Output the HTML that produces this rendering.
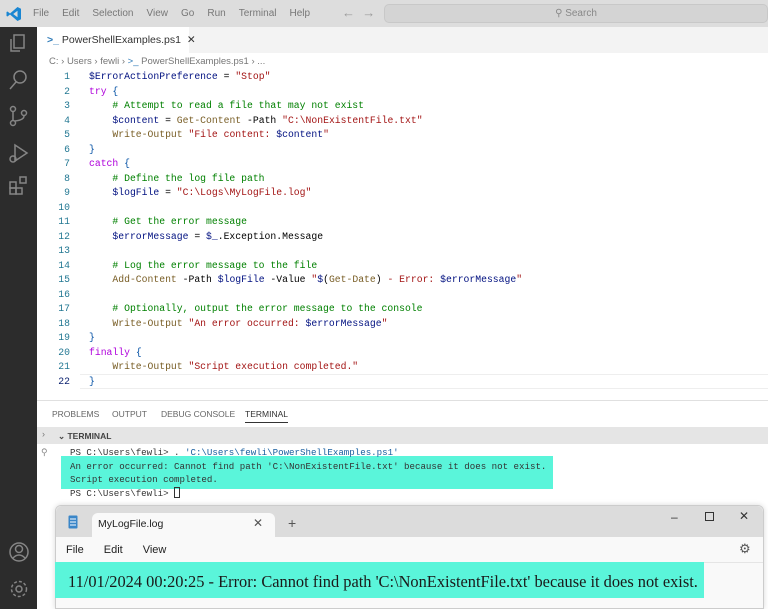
<!DOCTYPE html>
<html><head><meta charset="utf-8"><style>
*{margin:0;padding:0;box-sizing:border-box}
body{width:768px;height:609px;overflow:hidden;background:#fff;font-family:"Liberation Sans",sans-serif;position:relative}
.abs{position:absolute}
.mono{font-family:"Liberation Mono",monospace;font-size:9.75px;white-space:pre}
.code div{position:absolute;left:0;height:14px;line-height:14px}
.code .ln{position:absolute;width:34px;text-align:right;color:#237893;left:36px}
.k{color:#af00db}.v{color:#001080}.s{color:#a31515}.c{color:#008000}.f{color:#795e26}.p{color:#0451a5}.o{color:#000}
.menu span{margin-right:13px}
</style></head><body>
<!-- title bar -->
<div class="abs" style="left:0;top:0;width:768px;height:27px;background:#dddddd"></div>
<svg class="abs" style="left:6px;top:6px" width="16" height="16" viewBox="0 0 16 16"><path d="M11.5 1 L15 2.7 V13.3 L11.5 15 L4 8.5 L1.5 10.5 L0.5 10 V6 L1.5 5.5 L4 7.5 Z M11.5 4.8 L7.2 8 L11.5 11.2 Z" fill="#1a86d2"/></svg>
<div class="abs menu" style="left:33px;top:8px;font-size:10px;color:#777;white-space:nowrap">
<span>File</span><span>Edit</span><span>Selection</span><span>View</span><span>Go</span><span>Run</span><span>Terminal</span><span>Help</span></div>
<div class="abs" style="left:342px;top:5px;font-size:13px;color:#999">←&nbsp;&nbsp;→</div>
<div class="abs" style="left:384px;top:4px;width:384px;height:19px;background:#d4d4d4;border:1px solid #c8c8c8;border-radius:5px;font-size:10px;color:#888;text-align:center;line-height:17px">⚲ Search</div>
<!-- activity bar -->
<div class="abs" style="left:0;top:27px;width:37px;height:582px;background:#2c2c2c"></div>
<svg class="abs" style="left:7px;top:32px" width="24" height="170" viewBox="0 0 24 170" fill="none" stroke="#858585" stroke-width="1.5">
<rect x="7" y="3" width="10" height="13"/><path d="M4 7 V19 H13"/>
<circle cx="13" cy="45" r="6"/><path d="M9 50 L3 57"/>
<circle cx="6" cy="77" r="2.5"/><circle cx="6" cy="91" r="2.5"/><circle cx="17" cy="81" r="2.5"/><path d="M6 80 V88 M17 84 Q17 88 8 89"/>
<path d="M8 113 V129 L20 121 Z"/><circle cx="6" cy="127" r="3"/>
<rect x="3" y="156" width="6" height="6"/><rect x="9" y="156" width="6" height="6"/><rect x="3" y="150" width="6" height="6"/><rect x="13" y="145" width="6" height="6"/>
</svg>
<svg class="abs" style="left:7px;top:540px" width="24" height="62" viewBox="0 0 24 62" fill="none" stroke="#858585" stroke-width="1.5">
<circle cx="12" cy="12" r="9"/><circle cx="12" cy="9" r="3.5"/><path d="M6 18 Q12 12 18 18"/>
<circle cx="12" cy="49" r="3"/><circle cx="12" cy="49" r="7.5" stroke-dasharray="3 2"/>
</svg>
<!-- tab bar -->
<div class="abs" style="left:37px;top:27px;width:731px;height:26px;background:#f3f3f3"></div>
<div class="abs" style="left:37px;top:27px;width:152px;height:26px;background:#fff;font-size:10.5px;color:#333;line-height:26px;padding-left:10px;white-space:nowrap"><span style="color:#2d7ab8;font-weight:bold">&gt;_</span> PowerShellExamples.ps1 <span style="margin-left:3px">✕</span></div>
<div class="abs" style="left:49px;top:56px;font-size:9.5px;color:#777;white-space:nowrap">C: › Users › fewli › <span style="color:#2d7ab8">&gt;_</span> PowerShellExamples.ps1 › ...</div>
<!-- code -->
<div class="abs mono code" style="left:0;top:70px;width:768px;height:330px">
<div class="ln" style="top:0">1</div><div style="left:89px;top:0"><span class="v">$ErrorActionPreference</span> <span class="o">=</span> <span class="s">"Stop"</span></div>
<div class="ln" style="top:14.5px">2</div><div style="left:89px;top:14.5px"><span class="k">try</span> <span class="p">{</span></div>
<div class="ln" style="top:29px">3</div><div style="left:89px;top:29px"><span class="c">    # Attempt to read a file that may not exist</span></div>
<div class="ln" style="top:43.5px">4</div><div style="left:89px;top:43.5px">    <span class="v">$content</span> = <span class="f">Get-Content</span> <span class="o">-Path</span> <span class="s">"C:\NonExistentFile.txt"</span></div>
<div class="ln" style="top:58px">5</div><div style="left:89px;top:58px">    <span class="f">Write-Output</span> <span class="s">"File content: </span><span class="v">$content</span><span class="s">"</span></div>
<div class="ln" style="top:72.5px">6</div><div style="left:89px;top:72.5px"><span class="p">}</span></div>
<div class="ln" style="top:87px">7</div><div style="left:89px;top:87px"><span class="k">catch</span> <span class="p">{</span></div>
<div class="ln" style="top:101.5px">8</div><div style="left:89px;top:101.5px"><span class="c">    # Define the log file path</span></div>
<div class="ln" style="top:116px">9</div><div style="left:89px;top:116px">    <span class="v">$logFile</span> = <span class="s">"C:\Logs\MyLogFile.log"</span></div>
<div class="ln" style="top:130.5px">10</div>
<div class="ln" style="top:145px">11</div><div style="left:89px;top:145px"><span class="c">    # Get the error message</span></div>
<div class="ln" style="top:159.5px">12</div><div style="left:89px;top:159.5px">    <span class="v">$errorMessage</span> = <span class="v">$_</span>.Exception.Message</div>
<div class="ln" style="top:174px">13</div>
<div class="ln" style="top:188.5px">14</div><div style="left:89px;top:188.5px"><span class="c">    # Log the error message to the file</span></div>
<div class="ln" style="top:203px">15</div><div style="left:89px;top:203px">    <span class="f">Add-Content</span> -Path <span class="v">$logFile</span> -Value <span class="s">"</span><span class="v">$</span>(<span class="f">Get-Date</span>) <span class="s">- Error: </span><span class="v">$errorMessage</span><span class="s">"</span></div>
<div class="ln" style="top:217.5px">16</div>
<div class="ln" style="top:232px">17</div><div style="left:89px;top:232px"><span class="c">    # Optionally, output the error message to the console</span></div>
<div class="ln" style="top:246.5px">18</div><div style="left:89px;top:246.5px">    <span class="f">Write-Output</span> <span class="s">"An error occurred: </span><span class="v">$errorMessage</span><span class="s">"</span></div>
<div class="ln" style="top:261px">19</div><div style="left:89px;top:261px"><span class="p">}</span></div>
<div class="ln" style="top:275.5px">20</div><div style="left:89px;top:275.5px"><span class="k">finally</span> <span class="p">{</span></div>
<div class="ln" style="top:290px">21</div><div style="left:89px;top:290px">    <span class="f">Write-Output</span> <span class="s">"Script execution completed."</span></div>
<div class="ln" style="top:304.5px;color:#0b216f">22</div><div style="left:89px;top:304.5px"><span class="p">}</span></div>
</div>
<div class="abs" style="left:80px;top:374px;width:688px;height:15px;border-top:1px solid #eee;border-bottom:1px solid #eee"></div>
<div class="abs" style="left:37px;top:400px;width:731px;height:1px;background:#e0e0e0"></div>
<!-- panel -->
<div class="abs" style="left:52px;top:409px;font-size:8.5px;color:#666">PROBLEMS</div>
<div class="abs" style="left:112px;top:409px;font-size:8.5px;color:#666">OUTPUT</div>
<div class="abs" style="left:161px;top:409px;font-size:8.5px;color:#666">DEBUG CONSOLE</div>
<div class="abs" style="left:245px;top:409px;font-size:8.5px;color:#333;border-bottom:1px solid #333;padding-bottom:3px">TERMINAL</div>
<div class="abs" style="left:37px;top:427px;width:731px;height:17px;background:#e5e5e5"></div>
<div class="abs" style="left:42px;top:429px;font-size:9px;color:#777">›</div>
<div class="abs" style="left:58px;top:431px;font-size:8.5px;color:#444;font-weight:bold">⌄ TERMINAL</div>
<div class="abs" style="left:41px;top:447px;font-size:9px;color:#888">⚲</div>
<div class="abs" style="left:61px;top:456px;width:492px;height:33px;background:#5af5da"></div>
<div class="abs mono" style="left:70px;top:446px;color:#333;line-height:13.7px;font-size:9.15px">PS C:\Users\fewli&gt; . <span style="color:#1a5fa0">'C:\Users\fewli\PowerShellExamples.ps1'</span>
An error occurred: Cannot find path 'C:\NonExistentFile.txt' because it does not exist.
Script execution completed.
PS C:\Users\fewli&gt; <span style="display:inline-block;width:6px;height:11px;border:1px solid #333;vertical-align:-2px"></span></div>
<!-- notepad -->
<div class="abs" style="left:55px;top:505px;width:709px;height:104px;background:#f9f9f9;border:1px solid #ccc;border-radius:6px 6px 0 0;box-shadow:0 0 6px rgba(0,0,0,.15)"></div>
<div class="abs" style="left:56px;top:506px;width:707px;height:31px;background:#dcdcdc;border-radius:6px 6px 0 0"></div>
<div class="abs" style="left:92px;top:513px;width:183px;height:25px;background:#f9f9f9;border-radius:6px 6px 0 0"></div>
<svg class="abs" style="left:68px;top:515px" width="10" height="14"><rect x="0.5" y="0.5" width="9" height="13" rx="1" fill="#3a86c8"/><path d="M2 4h6M2 7h6M2 10h6" stroke="#fff" stroke-width="1"/></svg>
<div class="abs" style="left:98px;top:518px;font-size:10.5px;color:#222">MyLogFile.log</div>
<div class="abs" style="left:253px;top:516px;font-size:12px;color:#555">✕</div>
<div class="abs" style="left:288px;top:515px;font-size:14px;color:#555">+</div>
<div class="abs" style="left:671px;top:510px;font-size:12px;color:#333">–</div>
<div class="abs" style="left:705px;top:512px;width:9px;height:9px;border:1.3px solid #333"></div>
<div class="abs" style="left:739px;top:509px;font-size:12px;color:#333">✕</div>
<div class="abs" style="left:66px;top:544px;font-size:11px;color:#222;white-space:nowrap"><span style="margin-right:20px">File</span><span style="margin-right:20px">Edit</span><span>View</span></div>
<div class="abs" style="left:739px;top:541px;font-size:13px;color:#555">⚙</div>
<div class="abs" style="left:56px;top:562px;width:707px;height:1px;background:#e5e5e5"></div>
<div class="abs" style="left:55px;top:562px;width:649px;height:36px;background:#5af5da"></div>
<div class="abs" style="left:68px;top:572px;font-family:'Liberation Serif',serif;font-size:16.4px;color:#1a1a1a;white-space:nowrap">11/01/2024 00:20:25 - Error: Cannot find path 'C:\NonExistentFile.txt' because it does not exist.</div>
</body></html>
